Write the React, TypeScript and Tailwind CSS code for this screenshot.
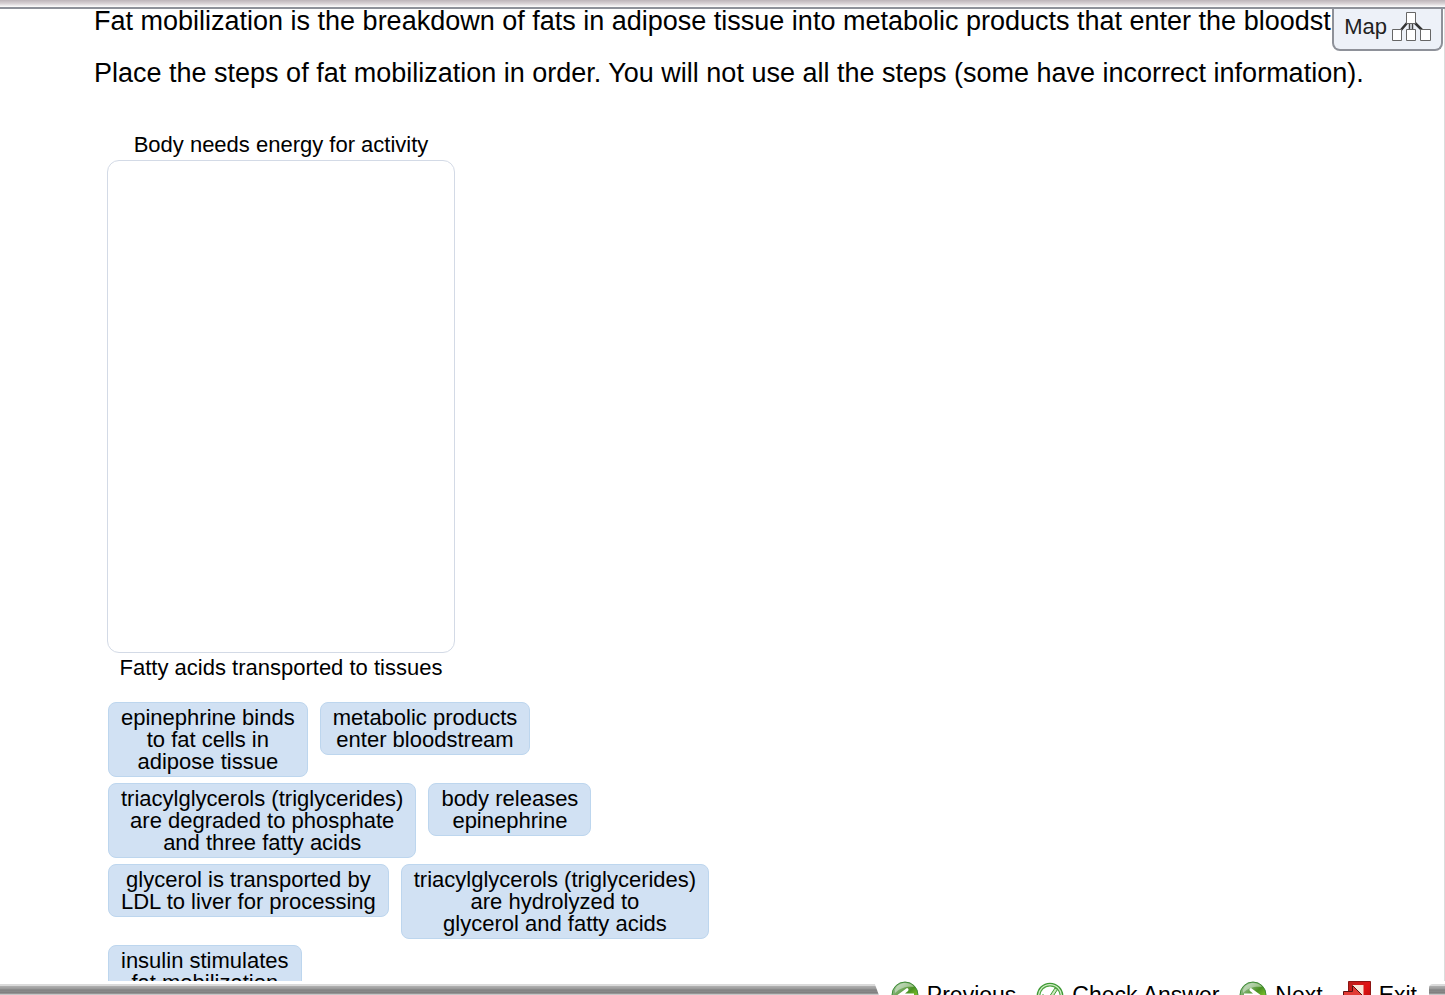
import React from 'react';

const tileRows = [
  [
    ['epinephrine binds', 'to fat cells in', 'adipose tissue'],
    ['metabolic products', 'enter bloodstream'],
  ],
  [
    ['triacylglycerols (triglycerides)', 'are degraded to phosphate', 'and three fatty acids'],
    ['body releases', 'epinephrine'],
  ],
  [
    ['glycerol is transported by', 'LDL to liver for processing'],
    ['triacylglycerols (triglycerides)', 'are hydrolyzed to', 'glycerol and fatty acids'],
  ],
  [['insulin stimulates', 'fat mobilization']],
];

function MapIcon() {
  return (
    <svg className="w-10 h-8 shrink-0" viewBox="0 0 40 32" fill="none" aria-hidden="true">
      <path d="M16 14L10 21M24 14l7 7" stroke="#333" strokeWidth="2.5" />
      <path d="M18.5 14v7M21.5 14v7" stroke="#444" strokeWidth="1.5" />
      <g fill="#fff" stroke="#666">
        <path d="M15.5 3.5h9v11h-9z" />
        <path d="M1.5 20.5h9v11h-9z" />
        <path d="M15.5 20.5h9v11h-9z" />
        <path d="M29.5 20.5h10v11h-10z" />
      </g>
    </svg>
  );
}

function ArrowIcon({ direction }: { direction: 'left' | 'right' }) {
  const id = `ball-${direction}`;
  return (
    <svg className="w-7 h-7 shrink-0" viewBox="0 0 28 28" aria-hidden="true">
      <defs>
        <linearGradient id={id} x1="0.1" y1="0" x2="0.8" y2="0.8">
          <stop offset="0" stopColor="#a9cba0" />
          <stop offset="0.3" stopColor="#7fb070" />
          <stop offset="0.6" stopColor="#4a9122" />
          <stop offset="1" stopColor="#8fd22c" />
        </linearGradient>
      </defs>
      <circle cx="14" cy="14" r="13" fill={`url(#${id})`} stroke="#3c8a35" />
      <path d="M4 9C6 4 10 2 14 2s7 1 9 4c-6-1-13 0-19 6z" fill="#fff" opacity="0.4" />
      {direction === 'left' ? (
        <path d="M16 7L5 15l11 8c1.5-1 1.5-3 0-4l-2-1.5h9v-5h-9l3-2.500c1-1 .5-2.500-1-3z" fill="#fff" />
      ) : (
        <path d="M12 7l11 8-11 8c-1.5-1-1.500-3 0-4l2-1.5H5v-5h9l-3-2.500c-1-1-.5-2.500 1-3z" fill="#fff" />
      )}
    </svg>
  );
}

function CheckIcon() {
  return (
    <svg className="w-7 h-7 shrink-0" viewBox="0 0 28 28" fill="none" aria-hidden="true">
      <circle cx="14" cy="15" r="11.5" stroke="#d3edc8" strokeWidth="2" />
      <circle cx="14" cy="15" r="12.7" stroke="#3f9a35" strokeWidth="1.3" />
      <circle cx="14" cy="15" r="10.2" stroke="#4fa540" strokeWidth="1.2" />
      <path d="M7 13.500l4.500 5L19 7l2.500 1.500L12 23 5.500 15z" fill="#cdeabc" stroke="#3f9a35" />
    </svg>
  );
}

function ExitIcon() {
  return (
    <svg className="w-7 h-7 shrink-0" viewBox="0 0 28 28" aria-hidden="true">
      <defs>
        <linearGradient id="door" x1="0" y1="0" x2="1" y2="1">
          <stop offset="0" stopColor="#b8201c" />
          <stop offset="0.5" stopColor="#e01414" />
          <stop offset="1" stopColor="#a80808" />
        </linearGradient>
      </defs>
      <path d="M5.500 .5h22v27h-22z" fill="url(#door)" stroke="#8c1512" />
      <path d="M9 4h11.500v21H9z" fill="#f7e6d8" />
      <path d="M.5 10.500h9v-6l11 11-11 11v-6h-9z" fill="#e23a34" stroke="#5a1010" />
    </svg>
  );
}

const navItems = [
  { label: 'Previous', icon: <ArrowIcon direction="left" /> },
  { label: 'Check Answer', icon: <CheckIcon /> },
  { label: 'Next', icon: <ArrowIcon direction="right" /> },
  { label: 'Exit', icon: <ExitIcon /> },
];

function Tile({ lines }: { lines: string[] }) {
  return (
    <button
      type="button"
      className="rounded-lg border border-[#bdd6ee] bg-[#d1e1f3] px-3 pt-1 pb-[3px] text-center text-[22px] leading-[22px] whitespace-nowrap"
    >
      {lines.map((line) => (
        <span key={line} className="block">
          {line}
        </span>
      ))}
    </button>
  );
}

export default function App() {
  return (
    <div className="flex h-screen flex-col overflow-hidden bg-white font-['Liberation_Sans',Arial,sans-serif] text-black">
      <div className="h-[9px] shrink-0 border-b-2 border-[#8e9199] bg-linear-to-b from-[#bdb4b9] via-[#d8d2d5] to-white" />

      <main className="min-h-0 flex-1 overflow-hidden border-r border-[#dcdcdc]">
        <div className="flex items-start pl-[94px]">
          <p className="min-w-0 flex-1 overflow-hidden pb-2 text-[27px] leading-6 whitespace-nowrap">
            Fat mobilization is the breakdown of fats in adipose tissue into metabolic products that enter the
            bloodstream.
          </p>
          <button
            type="button"
            className="mr-px flex h-[42px] shrink-0 items-start gap-1 rounded-b-lg border-2 border-t-0 border-[#8e9199] bg-[#edf1f8] px-[10px] text-[22px] leading-9 text-[#222]"
          >
            Map
            <MapIcon />
          </button>
        </div>
        <p className="mt-2 pl-[94px] text-[27px] leading-7 whitespace-nowrap">
          Place the steps of fat mobilization in order. You will not use all the steps (some have incorrect
          information).
        </p>

        <section className="mt-[43px] ml-[107px] w-[348px] text-center text-[22px] leading-[30px]">
          <h2>Body needs energy for activity</h2>
          <div className="h-[493px] rounded-xl border border-[#d3dae6]" />
          <h2>Fatty acids transported to tissues</h2>
        </section>

        <div className="mt-[19px] ml-[108px] flex flex-col gap-1.5">
          {tileRows.map((row, index) => (
            <div key={index} className="flex items-start gap-3">
              {row.map((lines) => (
                <Tile key={lines.join(' ')} lines={lines} />
              ))}
            </div>
          ))}
        </div>
      </main>

      <footer className="flex h-[14px] shrink-0 items-start">
        <div className="flex-1 pt-[3px]">
          <div className="h-[11px] bg-[linear-gradient(#dadada_0_2px,#b0b0b0_2px,#989898_5px,#7c7c7c_6px,#8c8c8c_7px,#7c7c7c_9px,#e0e0e0_11px)] [clip-path:polygon(0_0,calc(100%-4px)_0,100%_100%,0_100%)]" />
        </div>
        <nav className="flex items-start gap-5 px-3">
          {navItems.map((item) => (
            <button key={item.label} type="button" className="flex items-start gap-2 text-[23px] leading-7">
              {item.icon}
              {item.label}
            </button>
          ))}
        </nav>
        <div className="w-4 pt-[3px]">
          <div className="h-[11px] rounded-tl-sm bg-[linear-gradient(#dadada_0_2px,#b0b0b0_2px,#989898_5px,#7c7c7c_6px,#8c8c8c_7px,#7c7c7c_9px,#e0e0e0_11px)]" />
        </div>
      </footer>
    </div>
  );
}
